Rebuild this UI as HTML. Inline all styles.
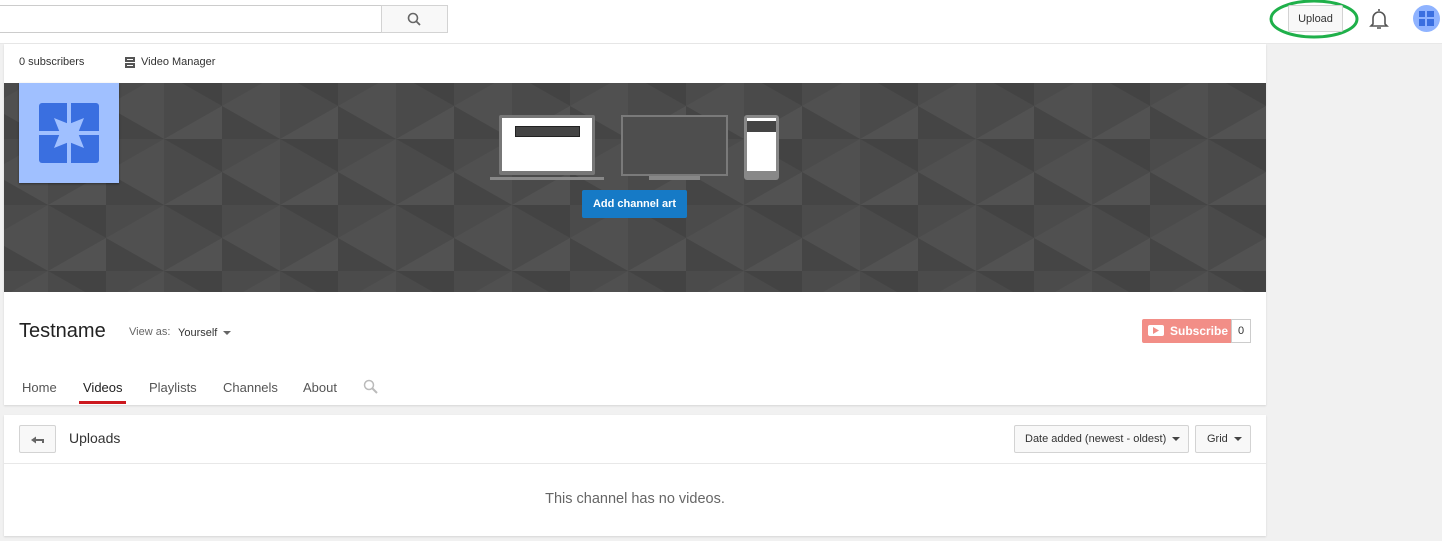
<!DOCTYPE html>
<html><head><meta charset="utf-8"><style>
*{box-sizing:border-box;margin:0;padding:0}
body{width:1442px;height:541px;overflow:hidden;background:#f1f1f1;font-family:"Liberation Sans",Arial,sans-serif;position:relative;color:#222}
.abs{position:absolute}
.top{left:0;top:0;width:1442px;height:44px;background:#fff;border-bottom:1px solid #e8e8e8}
.search{left:-2px;top:5px;width:384px;height:28px;border:1px solid #ccc;background:#fff}
.sbtn{left:381px;top:5px;width:67px;height:28px;border:1px solid #d3d3d3;background:#f8f8f8}
.card{background:#fff;box-shadow:0 1px 2px rgba(0,0,0,.12)}
.btn{border:1px solid #d3d3d3;background:#f8f8f8;border-radius:2px;font-size:11px;color:#333}
.tab{top:380px;font-size:13px;color:#555}
.caret{display:inline-block;border-left:4px solid transparent;border-right:4px solid transparent;border-top:4px solid #444;vertical-align:middle;margin-left:6px}
</style></head><body>
<div class="abs top"></div>
<div class="abs search"></div>
<div class="abs sbtn"><svg width="67" height="28" style="position:absolute;left:-1px;top:-1px"><circle cx="32" cy="13" r="4.5" fill="none" stroke="#666" stroke-width="1.6"/><line x1="35.5" y1="16.5" x2="39" y2="20" stroke="#666" stroke-width="1.8"/></svg></div>
<svg class="abs" style="left:1266px;top:0" width="96" height="40"><ellipse cx="48" cy="19" rx="43" ry="18" fill="none" stroke="#1fb04a" stroke-width="3"/></svg>
<div class="abs btn" style="left:1288px;top:5px;width:55px;height:27px;line-height:27px;text-align:center">Upload</div>
<svg class="abs" style="left:1368px;top:7px" width="22" height="24"><path d="M11 2 v2 M5 17 V11 a6 6 0 0 1 12 0 V17 L19 19 H3 Z M9 21 h4" fill="none" stroke="#555" stroke-width="1.6"/></svg>
<div class="abs" style="left:1413px;top:5px;width:27px;height:27px;border-radius:50%;background:#8fb3ff;overflow:hidden"><div style="position:absolute;left:6px;top:6px;width:15px;height:15px;background:#3a6fe0"></div><div style="position:absolute;left:12px;top:6px;width:2px;height:15px;background:#8fb3ff"></div><div style="position:absolute;left:6px;top:12px;width:15px;height:2px;background:#8fb3ff"></div></div>

<div class="abs card" style="left:4px;top:44px;width:1262px;height:361px"></div>
<div class="abs" style="left:19px;top:56px;font-size:11px;color:#333">0 subscribers</div>
<svg class="abs" style="left:125px;top:57px" width="10" height="11"><rect x="0" y="0" width="10" height="5" fill="#555"/><rect x="0" y="6" width="10" height="5" fill="#555"/><rect x="2" y="2" width="6" height="1" fill="#fff"/><rect x="2" y="8" width="6" height="1" fill="#fff"/></svg>
<div class="abs" style="left:141px;top:56px;font-size:11px;color:#333">Video Manager</div>

<svg class="abs" style="left:4px;top:83px" width="1262" height="209">
<defs><pattern id="p" width="116" height="66" patternUnits="userSpaceOnUse" x="-14" y="-10">
<rect width="116" height="66" fill="#484848"/>
<polygon points="0,0 58,0 0,33" fill="#4b4b4b"/>
<polygon points="58,0 116,0 116,33" fill="#434343"/>
<polygon points="58,0 58,66 0,33" fill="#505050"/>
<polygon points="58,0 58,66 116,33" fill="#4a4a4a"/>
<polygon points="0,33 0,66 58,66" fill="#454545"/>
<polygon points="116,33 116,66 58,66" fill="#525252"/>
</pattern></defs>
<rect width="1262" height="209" fill="url(#p)"/>
</svg>
<div class="abs" style="left:19px;top:83px;width:100px;height:100px;background:#a0c0ff;box-shadow:0 1px 2px rgba(0,0,0,.4)">
<div style="position:absolute;left:20px;top:20px;width:60px;height:60px;background:#3a6fe0;border-radius:3px"></div>
<div style="position:absolute;left:48px;top:20px;width:4px;height:60px;background:#a0c0ff"></div>
<div style="position:absolute;left:20px;top:48px;width:60px;height:4px;background:#a0c0ff"></div>
<svg style="position:absolute;left:35px;top:35px" width="30" height="30"><polygon points="0,0 15,6 30,0 24,15 30,30 15,24 0,30 6,15" fill="#a0c0ff"/></svg>
</div>
<div class="abs" style="left:499px;top:115px;width:96px;height:60px;background:#777;border-radius:2px"></div>
<div class="abs" style="left:502px;top:118px;width:90px;height:53px;background:#fff"></div>
<div class="abs" style="left:515px;top:126px;width:65px;height:11px;background:#444;border:1px solid #222"></div>
<div class="abs" style="left:490px;top:177px;width:114px;height:3px;background:#888"></div>
<div class="abs" style="left:621px;top:115px;width:107px;height:61px;background:#4e4e4e;border:2px solid #7a7a7a"></div>
<div class="abs" style="left:649px;top:176px;width:51px;height:4px;background:#888"></div>
<div class="abs" style="left:744px;top:115px;width:35px;height:65px;background:#888;border-radius:3px"></div>
<div class="abs" style="left:747px;top:118px;width:29px;height:53px;background:#fff"></div>
<div class="abs" style="left:747px;top:121px;width:29px;height:11px;background:#444"></div>
<div class="abs" style="left:582px;top:190px;width:105px;height:28px;background:#167ac6;border-radius:2px;color:#fff;font-size:11px;font-weight:bold;text-align:center;line-height:29px">Add channel art</div>

<div class="abs" style="left:19px;top:320px;font-size:20px;color:#222">Testname</div>
<div class="abs" style="left:129px;top:326px;font-size:11px;color:#666">View as:</div>
<div class="abs" style="left:178px;top:327px;font-size:11px;color:#333">Yourself<span class="caret" style="border-top-color:#666"></span></div>
<div class="abs" style="left:1142px;top:319px;width:89px;height:24px;background:#f28e87;border-radius:2px 0 0 2px;color:#fff;font-size:12px;font-weight:bold;line-height:24px;padding-left:28px">Subscribe</div>
<div class="abs" style="left:1148px;top:325px;width:16px;height:11px;background:#fff;border-radius:2px"></div>
<svg class="abs" style="left:1153px;top:327px" width="6" height="7"><polygon points="0,0 6,3.5 0,7" fill="#f28e87"/></svg>
<div class="abs" style="left:1231px;top:319px;width:20px;height:24px;border:1px solid #ccc;background:#fff;font-size:11px;line-height:22px;text-align:center;color:#333">0</div>

<div class="abs tab" style="left:22px">Home</div>
<div class="abs tab" style="left:83px;color:#222">Videos</div>
<div class="abs" style="left:79px;top:401px;width:47px;height:3px;background:#cc181e"></div>
<div class="abs tab" style="left:149px">Playlists</div>
<div class="abs tab" style="left:223px">Channels</div>
<div class="abs tab" style="left:303px">About</div>
<svg class="abs" style="left:363px;top:379px" width="16" height="16"><circle cx="6" cy="6" r="4.5" fill="none" stroke="#bbb" stroke-width="1.5"/><line x1="9.5" y1="9.5" x2="14" y2="14" stroke="#bbb" stroke-width="2"/></svg>

<div class="abs card" style="left:4px;top:415px;width:1262px;height:121px"></div>
<div class="abs" style="left:4px;top:463px;width:1262px;height:1px;background:#e8e8e8"></div>
<div class="abs btn" style="left:19px;top:425px;width:37px;height:28px"><svg width="37" height="28"><path d="M13 14 H23 V17" fill="none" stroke="#666" stroke-width="2"/><path d="M11 14 l5 -3.5 v7 z" fill="#666"/></svg></div>
<div class="abs" style="left:69px;top:430px;font-size:14px;color:#333">Uploads</div>
<div class="abs btn" style="left:1014px;top:425px;width:175px;height:28px;line-height:27px;padding-left:10px">Date added (newest - oldest)<span class="caret"></span></div>
<div class="abs btn" style="left:1195px;top:425px;width:56px;height:28px;line-height:27px;padding-left:11px">Grid<span class="caret"></span></div>
<div class="abs" style="left:0;top:491px;width:1270px;text-align:center;font-size:14.5px;color:#666">This channel has no videos.</div>
</body></html>
